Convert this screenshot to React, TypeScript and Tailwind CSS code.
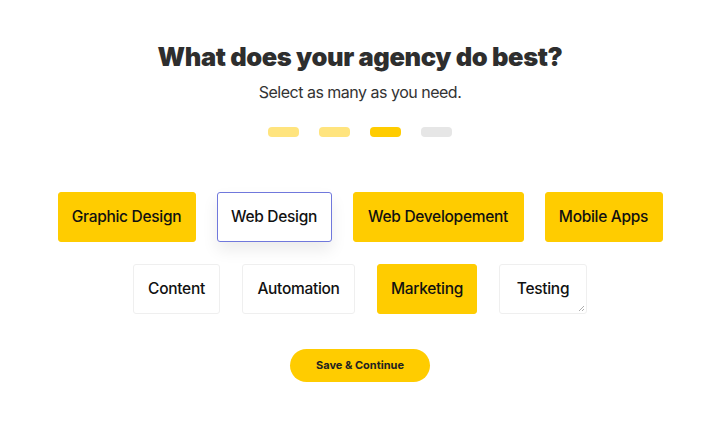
const rowOne = [
  { label: "Graphic Design", w: "w-[138px]", on: true },
  { label: "Web Design", w: "w-[115px]", on: false, focus: true },
  { label: "Web Developement", w: "w-[171px]", on: true },
  { label: "Mobile Apps", w: "w-[118px]", on: true },
];

const rowTwo = [
  { label: "Content", w: "w-[87px]", on: false },
  { label: "Automation", w: "w-[113px]", on: false },
  { label: "Marketing", w: "w-[100px]", on: true },
  { label: "Testing", w: "w-[88px]", on: false, grip: true },
];

type Opt = { label: string; w: string; on: boolean; focus?: boolean; grip?: boolean };

const Option = ({ opt }: { opt: Opt }) => {
  let cls = "border border-[#efefef] bg-white";
  if (opt.on) cls = "border border-[#ffcc00] bg-[#ffcc00]";
  if (opt.focus) cls = "border border-[#7078dc] bg-white shadow-[0_8px_16px_rgba(0,0,0,0.08)]";
  return (
    <div
      className={`relative flex h-[50px] items-center justify-center rounded-[3px] text-[15.5px] font-medium tracking-[-0.3px] text-[#111] ${opt.w} ${cls}`}
    >
      {opt.label}
      {opt.grip && (
        <svg className="absolute bottom-[1px] right-[1px]" width="8" height="8" viewBox="0 0 8 8">
          <path d="M7 2 L2 7 M7 5 L5 7" stroke="#999" strokeWidth="0.8" />
        </svg>
      )}
    </div>
  );
};

export default function App() {
  return (
    <div className="flex h-[429px] w-[720px] flex-col items-center bg-white pt-[40px] font-['Inter',sans-serif] text-[#333]">
      <h1 className="text-[25.5px] leading-[34px] font-black tracking-[-0.4px] text-[#2e2e2e]">
        What does your agency do best?
      </h1>
      <p className="mt-[8px] text-[16px] leading-[20px] tracking-[-0.5px] text-[#333]">
        Select as many as you need.
      </p>
      <div className="mt-[25px] flex gap-[20px]">
        <div className="h-[10px] w-[31px] rounded-[4px] bg-[#ffe47e]" />
        <div className="h-[10px] w-[31px] rounded-[4px] bg-[#ffe47e]" />
        <div className="h-[10px] w-[31px] rounded-[4px] bg-[#ffcc00]" />
        <div className="h-[10px] w-[31px] rounded-[4px] bg-[#e6e6e6]" />
      </div>
      <div className="mt-[55px] flex gap-[21px]">
        {rowOne.map((o) => (
          <Option key={o.label} opt={o} />
        ))}
      </div>
      <div className="mt-[22px] flex gap-[22px]">
        {rowTwo.map((o) => (
          <Option key={o.label} opt={o} />
        ))}
      </div>
      <button className="mt-[35px] h-[33px] w-[140px] rounded-full bg-[#ffcc00] text-[11px] font-bold text-[#222]">
        Save &amp; Continue
      </button>
    </div>
  );
}
